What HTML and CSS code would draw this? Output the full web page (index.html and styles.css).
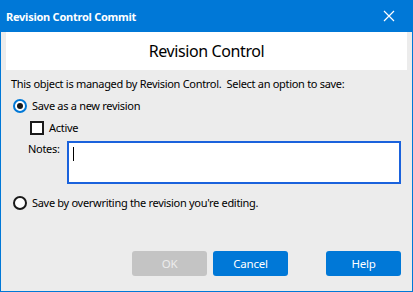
FILE: index.html
```html
<!DOCTYPE html>
<html>
<head>
<meta charset="utf-8">
<link rel="stylesheet" href="styles.css">
</head>
<body>
<div class="window">
  <div class="titlebar">
    <span class="title">Revision Control Commit</span>
    <svg class="close" width="12" height="12" viewBox="0 0 12 12"><path d="M1 1L11 11M11 1L1 11" stroke="#fff" stroke-width="1.2" fill="none"/></svg>
  </div>
  <div class="content">
    <div class="header">Revision Control</div>
    <div class="intro">This object is managed by Revision Control.&nbsp; Select an option to save:</div>
    <div class="option first">
      <span class="radio checked"><span class="dot"></span></span>
      <span>Save as a new revision</span>
    </div>
    <div class="check-row">
      <span class="checkbox"></span>
      <span>Active</span>
    </div>
    <div class="notes-row">
      <span class="notes-label">Notes:</span>
      <div class="notes"><span class="caret"></span></div>
    </div>
    <div class="option second">
      <span class="radio"></span>
      <span>Save by overwriting the revision you're editing.</span>
    </div>
    <div class="buttons">
      <button class="btn disabled">OK</button>
      <button class="btn">Cancel</button>
      <button class="btn help">Help</button>
    </div>
  </div>
</div>
</body>
</html>
```
FILE: styles.css
```css
html, body { margin: 0; padding: 0; }
body { font-family: "Noto Sans", "Open Sans", sans-serif; font-size: 11px; color: #000; letter-spacing: -0.3px; }
.window {
  width: 413px; height: 292px; box-sizing: border-box;
  border: 1px solid #0078d7; border-top: none;
  background: #ececec; display: flex; flex-direction: column;
}
.titlebar {
  height: 32px; background: #0078d7; color: #fff;
  display: flex; align-items: center; justify-content: space-between;
  padding: 0 18px 0 6px; margin: 0 -1px; flex: none;
}
.title { font-weight: bold; font-size: 11px; letter-spacing: -0.25px; }
.close { display: block; }
.content { flex: 1; display: flex; flex-direction: column; padding: 0 5px; }
.header {
  background: #fff; height: 38px; display: flex; align-items: center; justify-content: center;
  font-size: 16px; letter-spacing: -0.4px;
}
.intro { margin: 6px 0 0 5px; line-height: 16px; }
.option { display: flex; align-items: center; gap: 5px; margin-left: 7px; line-height: 16px; }
.option.first { margin-top: 6px; }
.option.second { margin-top: 11px; }
.radio {
  width: 14px; height: 14px; box-sizing: border-box; border-radius: 50%;
  border: 2px solid #1a1a1a; background: #fff; display: flex; align-items: center; justify-content: center; flex: none;
}
.radio.checked { border-color: #0078d7; }
.dot { width: 6px; height: 6px; border-radius: 50%; background: #1a1a1a; }
.check-row { display: flex; align-items: center; gap: 5px; margin: 6px 0 0 24px; line-height: 16px; }
.checkbox { width: 14px; height: 14px; box-sizing: border-box; border: 2px solid #1a1a1a; background: #fff; flex: none; }
.notes-row { display: flex; margin: 5px 0 0 22px; }
.notes-label { width: 39px; line-height: 16px; }
.notes {
  width: 334px; height: 43px; box-sizing: border-box; border: 2px solid #1a62dc; background: #fff;
  padding: 4px 0 0 4px;
}
.caret { display: block; width: 1px; height: 14px; background: #000; }
.buttons { display: flex; margin: auto 0 15px 126px; }
.btn {
  width: 75px; height: 25px; border: none; border-radius: 3px; background: #0078d7; color: #fff;
  font-family: inherit; font-size: 11.5px; padding: 0; margin-right: 6px; letter-spacing: -0.2px;
}
.btn.disabled { background: #c4c4c4; color: #ececec; }
.btn.help { margin-left: 32px; margin-right: 0; }
```
